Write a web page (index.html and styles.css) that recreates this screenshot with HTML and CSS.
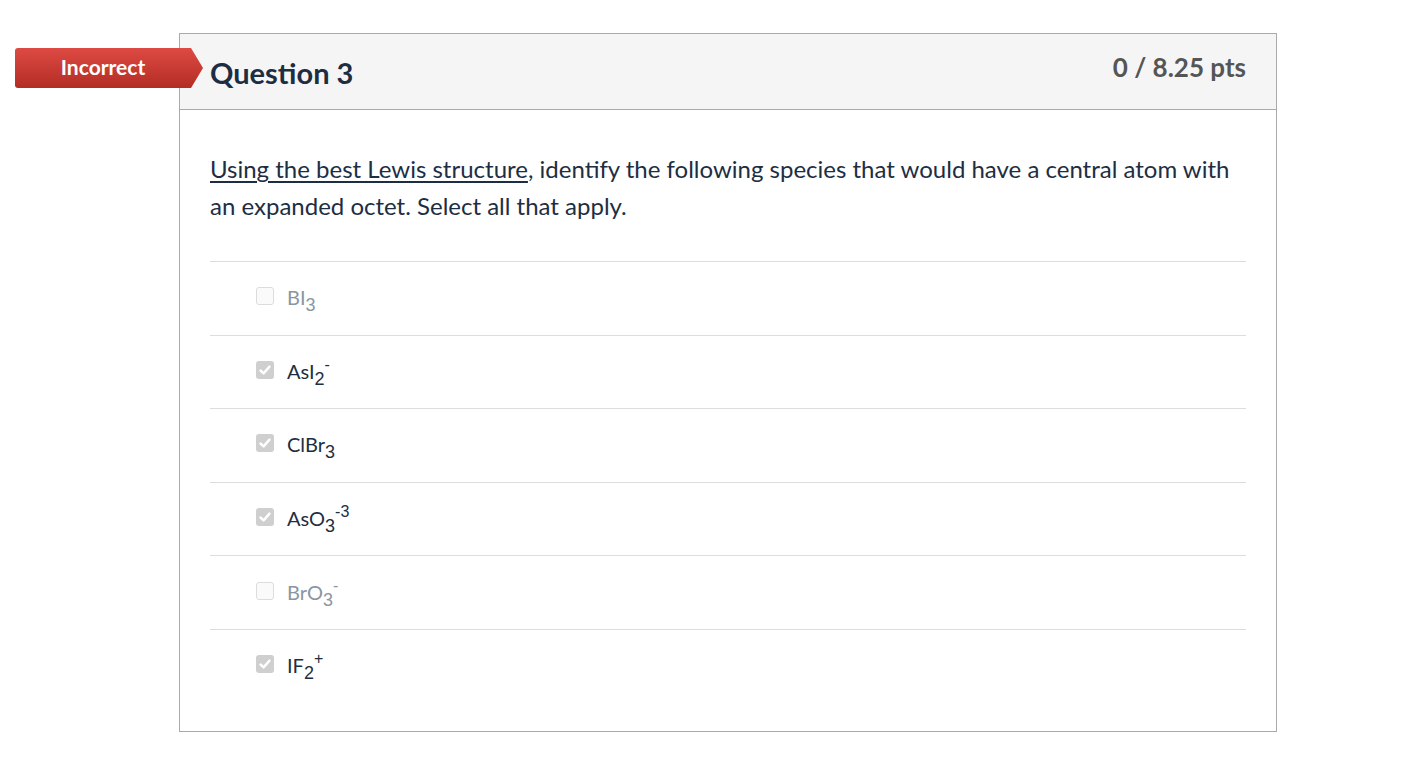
FILE: index.html
```html
<!DOCTYPE html>
<html>
<head>
<meta charset="utf-8">
<link rel="stylesheet" href="styles.css">
</head>
<body>
<div class="page">
  <div class="card">
    <div class="badge">Incorrect</div>
    <div class="card-header">
      <h2 class="title">Question 3</h2>
      <div class="pts">0 / 8.25 pts</div>
    </div>
    <div class="card-body">
      <p class="question"><span class="u">Using the best Lewis structure</span>, identify the following species that would have a central atom with an expanded octet. Select all that apply.</p>
      <ul class="answers">
        <li class="answer off"><span class="box"></span><span class="label">BI<sub>3</sub></span></li>
        <li class="answer on"><span class="box"><svg viewBox="0 0 18 18" width="18" height="18"><path d="M4.5 9.5 L7.6 12.4 L13.5 5.6" fill="none" stroke="#fff" stroke-width="2.4" stroke-linecap="round" stroke-linejoin="round"/></svg></span><span class="label">AsI<sub>2</sub><sup>-</sup></span></li>
        <li class="answer on"><span class="box"><svg viewBox="0 0 18 18" width="18" height="18"><path d="M4.5 9.5 L7.6 12.4 L13.5 5.6" fill="none" stroke="#fff" stroke-width="2.4" stroke-linecap="round" stroke-linejoin="round"/></svg></span><span class="label">ClBr<sub>3</sub></span></li>
        <li class="answer on"><span class="box"><svg viewBox="0 0 18 18" width="18" height="18"><path d="M4.5 9.5 L7.6 12.4 L13.5 5.6" fill="none" stroke="#fff" stroke-width="2.4" stroke-linecap="round" stroke-linejoin="round"/></svg></span><span class="label">AsO<sub>3</sub><sup>-3</sup></span></li>
        <li class="answer off"><span class="box"></span><span class="label">BrO<sub>3</sub><sup>-</sup></span></li>
        <li class="answer on"><span class="box"><svg viewBox="0 0 18 18" width="18" height="18"><path d="M4.5 9.5 L7.6 12.4 L13.5 5.6" fill="none" stroke="#fff" stroke-width="2.4" stroke-linecap="round" stroke-linejoin="round"/></svg></span><span class="label">IF<sub>2</sub><sup>+</sup></span></li>
      </ul>
    </div>
  </div>
</div>
</body>
</html>
```
FILE: styles.css
```css
html, body {
  margin: 0;
  padding: 0;
  background: #fff;
  font-family: Lato, "Liberation Sans", sans-serif;
  color: #2d3b45;
}
.page {
  padding: 33px 0 0 179px;
}
.card {
  position: relative;
  width: 1096px;
  border: 1px solid #aaaaaa;
  background: #fff;
}
.badge {
  position: absolute;
  left: -165px;
  top: 14px;
  width: 188px;
  height: 40px;
  line-height: 38px;
  padding-right: 12px;
  box-sizing: border-box;
  text-align: center;
  color: #fff;
  font-weight: 700;
  font-size: 21px;
  background: linear-gradient(#dd4a43, #b32d25);
  clip-path: polygon(0 0, 176px 0, 188px 20px, 176px 40px, 0 40px);
  border-radius: 3px 0 0 3px;
}
.card-header {
  height: 75px;
  background: #f5f5f5;
  border-bottom: 1px solid #aaaaaa;
  display: flex;
  justify-content: space-between;
  padding: 0 30px;
}
.title {
  margin: 0;
  padding-top: 23px;
  font-size: 29px;
  font-weight: 700;
  color: #1d2e43;
  line-height: 32px;
}
.pts {
  padding-top: 17px;
  font-size: 26px;
  font-weight: 700;
  color: #555555;
  line-height: 32px;
}
.card-body {
  padding: 40px 30px 28px;
}
.question {
  margin: 0 0 37px;
  font-size: 24px;
  line-height: 37px;
  color: #1d2e43;
}
.u {
  text-decoration: underline;
  text-underline-offset: 3px;
  text-decoration-thickness: 2px;
}
.answers {
  list-style: none;
  margin: 0;
  padding: 0;
}
.answer {
  border-top: 1px solid #dddddd;
  height: 72.6px;
  display: flex;
  align-items: center;
  padding-left: 46px;
  font-size: 20px;
}
.box {
  width: 18px;
  height: 18px;
  border-radius: 3px;
  box-sizing: border-box;
  margin-right: 13px;
  display: flex;
  position: relative;
  top: -2px;
}
.off .box {
  border: 1px solid #dcdcdc;
  background: #fafafa;
}
.on .box {
  background: #cfcfcf;
}
.label {
  line-height: 24px;
  position: relative;
  top: -1px;
}
.off .label {
  color: #8a96a2;
}
.on .label {
  color: #1d2e43;
}
.label sub, .label sup {
  font-family: "Liberation Sans", Arial, sans-serif;
  font-size: 18px;
  line-height: 0;
}
.label sub {
  vertical-align: -6px;
}
.label sup {
  vertical-align: 9px;
  font-size: 16px;
}
```
